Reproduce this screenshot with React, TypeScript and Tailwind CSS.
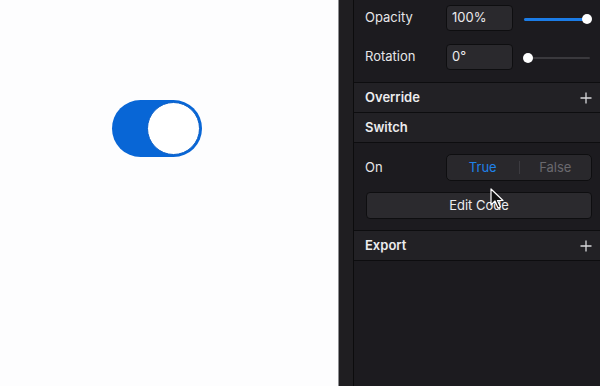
import React from "react";

function Plus() {
  return (
    <svg width="12" height="12" viewBox="0 0 12 12" className="text-[#d8d8da]">
      <path d="M6 0.5v11M0.5 6h11" stroke="currentColor" strokeWidth="1.3" />
    </svg>
  );
}

function Slider({ value, fill }: { value: number; fill: boolean }) {
  return (
    <div className="relative h-[12px] w-[66px]">
      <div className="absolute left-0 right-0 top-[5px] h-[2px] rounded-full bg-[#3a393d]" />
      {fill && (
        <div
          className="absolute left-0 top-[5px] h-[3px] rounded-full bg-[#1b7ce6]"
          style={{ width: `${value}%` }}
        />
      )}
      <div
        className="absolute top-[1px] h-[10px] w-[10px] -translate-x-1/2 rounded-full bg-white"
        style={{ left: `${value}%` }}
      />
    </div>
  );
}

function PropRow({ label, value, slider, fill }: { label: string; value: string; slider: number; fill: boolean }) {
  return (
    <div className="flex h-[26px] items-center">
      <span className="w-[81px] text-[13px] text-[#e6e6e8]">{label}</span>
      <div className="flex h-[26px] w-[67px] items-center rounded-[4px] border border-[#0e0e10] bg-[#2a292d] pl-[5px] text-[13px] text-[#ececee]">
        {value}
      </div>
      <div className="ml-[11px] mt-[1px]">
        <Slider value={slider} fill={fill} />
      </div>
    </div>
  );
}

function Header({ title, plus }: { title: string; plus?: boolean }) {
  return (
    <div className="flex h-[30px] items-center justify-between border-b border-[#0d0d0f] bg-[#222125] pl-[11px] pr-[8px]">
      <span className="text-[13px] font-semibold text-[#ececee]">{title}</span>
      {plus && <Plus />}
    </div>
  );
}

export default function App() {
  return (
    <div className="flex h-[386px] w-[600px] overflow-hidden" style={{ fontFamily: "Inter, 'Open Sans', sans-serif" }}>
      {/* canvas */}
      <div className="w-[338px] bg-[#fdfdfe] pl-[112px] pt-[100px]">
        <div className="flex h-[57px] w-[90px] items-center justify-end rounded-full bg-[#0866d6] pr-[2px]">
          <div className="h-[53px] w-[53px] rounded-full border-[1.5px] border-[#0a5fc8] bg-white" />
        </div>
      </div>

      <div className="w-[16px] border-l border-[#8d8d90] border-r border-r-[#0c0c0d] bg-[#1f1e21]" />

      {/* inspector */}
      <div className="relative flex-1 bg-[#1c1b1f]">
        <div className="flex flex-col gap-[13px] border-b border-[#0d0d0f] pb-[12px] pl-[11px] pt-[5px]">
          <PropRow label="Opacity" value="100%" slider={96} fill />
          <PropRow label="Rotation" value="0°" slider={6} fill={false} />
        </div>
        <Header title="Override" plus />
        <Header title="Switch" />
        <div className="flex flex-col gap-[11px] border-b border-[#0d0d0f] pb-[11px] pl-[11px] pr-[8px] pt-[11px]">
          <div className="flex h-[27px] items-center">
            <span className="w-[81px] text-[13px] text-[#e6e6e8]">On</span>
            <div className="flex h-[27px] flex-1 items-center rounded-[5px] border border-[#0e0e10] bg-[#29282c] text-[13px]">
              <span className="flex-1 text-center text-[#1f82ea]">True</span>
              <span className="h-[13px] w-px bg-[#3c3b40]" />
              <span className="flex-1 text-center text-[#6a696e]">False</span>
            </div>
          </div>
          <button className="ml-[1px] flex h-[27px] items-center justify-center rounded-[4px] border border-[#0e0e10] bg-[#2b2a2e] text-[13px] text-[#ececee]">
            Edit Code
          </button>
        </div>
        <Header title="Export" plus />

        {/* mouse cursor */}
        <svg className="absolute left-[136px] top-[188px]" width="14" height="22" viewBox="0 0 14 22">
          <path d="M1 1v16l4-4 3 7 2.5-1-3-6.5H13z" fill="#111" stroke="#fff" strokeWidth="1.2" strokeLinejoin="round" />
        </svg>
      </div>
    </div>
  );
}
